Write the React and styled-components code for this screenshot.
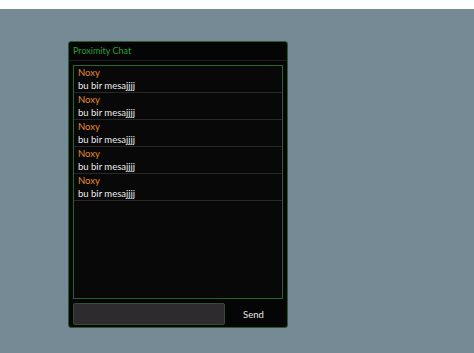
import styled, { createGlobalStyle } from 'styled-components';

const Global = createGlobalStyle`
	html, body {
		margin: 0;
		padding: 0;
		background: #ffffff;
	}
	body {
		font-family: Lato, "Open Sans", sans-serif;
	}
`;

const Stage = styled.div`
	margin-top: 9px;
	height: 344px;
	background-color: rgb(118 138 150);
	padding: 32px 0 0 68px;
	box-sizing: border-box;
`;

const Panel = styled.div`
	width: 220px;
	height: 287px;
	box-sizing: border-box;
	background-color: rgb(5 5 5);
	border: 1px solid rgb(40 90 45);
	border-radius: 3px;
	display: flex;
	flex-direction: column;
`;

const Header = styled.div`
	height: 17px;
	padding: 0 4px 1px;
	display: flex;
	align-items: center;
	font-size: 9px;
	color: rgb(40 160 50);
	border-bottom: 1px solid rgb(30 30 30);
`;

const Body = styled.div`
	flex: 1;
	display: flex;
	flex-direction: column;
	padding: 4px 4px 2px 4px;
	gap: 4px;
	min-height: 0;
`;

const MessageList = styled.div`
	flex: 1;
	border: 1px solid rgb(40 100 45);
	background-color: rgb(8 8 8);
	display: flex;
	flex-direction: column;
`;

const Message = styled.div`
	height: 27px;
	box-sizing: border-box;
	padding: 0 4px;
	border-bottom: 1px solid rgb(40 40 40);
	display: flex;
	flex-direction: column;
	font-size: 9.5px;
	line-height: 13px;
`;

const Author = styled.div`
	color: rgb(230 140 40);
`;

const Text = styled.div`
	color: rgb(235 235 235);
`;

const InputRow = styled.div`
	height: 22px;
	display: flex;
	align-items: center;
	gap: 4px;
`;

const Input = styled.input`
	width: 152px;
	height: 22px;
	box-sizing: border-box;
	background-color: rgb(45 43 45);
	border: 1px solid rgb(55 75 55);
	border-radius: 2px;
	outline: none;
	color: #ddd;
	font-size: 9px;
	padding: 0 4px;
`;

const SendButton = styled.button`
	flex: 1;
	height: 22px;
	background: transparent;
	border: none;
	color: rgb(230 230 230);
	font-family: Lato, "Open Sans", sans-serif;
	font-size: 9.5px;
	padding: 0 5px 0 0;
	cursor: pointer;
`;

const messages = Array.from({ length: 5 }, () => ({ author: 'Noxy', text: 'bu bir mesajjjj' }));

export default function App() {
	return (
		<>
			<Global />
			<Stage>
				<Panel>
					<Header>Proximity Chat</Header>
					<Body>
						<MessageList>
							{messages.map((m, i) => (
								<Message key={i}>
									<Author>{m.author}</Author>
									<Text>{m.text}</Text>
								</Message>
							))}
						</MessageList>
						<InputRow>
							<Input />
							<SendButton>Send</SendButton>
						</InputRow>
					</Body>
				</Panel>
			</Stage>
		</>
	);
}
